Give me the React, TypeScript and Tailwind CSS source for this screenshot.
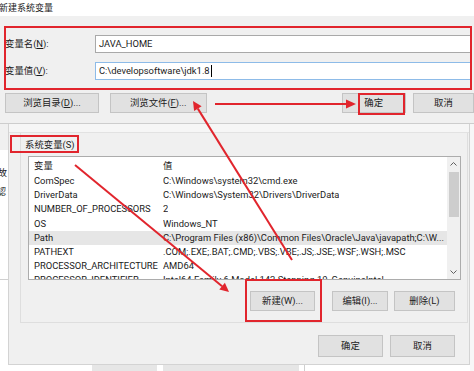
import React from "react";

const rows: [string, string][] = [
  ["ComSpec", "C:\\Windows\\system32\\cmd.exe"],
  ["DriverData", "C:\\Windows\\System32\\Drivers\\DriverData"],
  ["NUMBER_OF_PROCESSORS", "2"],
  ["OS", "Windows_NT"],
  ["Path", "C:\\Program Files (x86)\\Common Files\\Oracle\\Java\\javapath;C:\\W..."],
  ["PATHEXT", ".COM;.EXE;.BAT;.CMD;.VBS;.VBE;.JS;.JSE;.WSF;.WSH;.MSC"],
  ["PROCESSOR_ARCHITECTURE", "AMD64"],
  ["PROCESSOR_IDENTIFIER", "Intel64 Family 6 Model 142 Stepping 10, GenuineIntel"],
];

function Btn({ children, className }: { children: React.ReactNode; className: string }) {
  return (
    <div
      className={
        "flex items-center justify-center border border-[#c4c4c4] bg-[#e1e1e1] text-[#222] " + className
      }
    >
      {children}
    </div>
  );
}

export default function App() {
  const red = "#e1252d";
  return (
    <div className="relative w-[474px] h-[371px] overflow-hidden bg-[#f0f0f0] text-[9.4px] leading-[14px] text-[#1a1a1a] font-['Roboto','Noto_Sans_CJK_SC',sans-serif]">
      {/* Top dialog: 新建系统变量 */}
      <div className="h-[124px] border-b border-[#cdcdcd] flex flex-col">
        <div className="h-[16px] bg-white flex items-center -ml-[1px] text-[9px]">新建系统变量</div>
        <div className="flex items-center mt-[19px]">
          <div className="w-[95px] pl-[5px]">
            变量名(<u>N</u>):
          </div>
          <div className="w-[376px] h-[18px] bg-white border border-[#a9a9a9] flex items-center pl-[3px]">
            JAVA_HOME
          </div>
        </div>
        <div className="flex items-center mt-[9px]">
          <div className="w-[95px] pl-[5px]">
            变量值(<u>V</u>):
          </div>
          <div className="w-[376px] h-[18px] bg-white border border-[#8dbbe8] flex items-center pl-[3px]">
            <span>C:\developsoftware\jdk1.8</span>
            <span className="w-px h-[12px] bg-black ml-px" />
          </div>
        </div>
        <div className="flex mt-[13px]">
          <Btn className="ml-[5px] w-[95px] h-[20px]">
            浏览目录(<u>D</u>)...
          </Btn>
          <Btn className="ml-[11px] w-[98px] h-[20px]">
            浏览文件(<u>F</u>)...
          </Btn>
          <Btn className="ml-[135px] w-[65px] h-[20px]">确定</Btn>
          <Btn className="ml-[7px] w-[62px] h-[20px]">取消</Btn>
        </div>
      </div>

      {/* Background dialog: 环境变量 */}
      <div className="flex h-[247px]">
        <div className="w-[8px] flex flex-col">
          <div className="h-[26px]" />
          <div className="flex-1 bg-white relative overflow-hidden text-[9px]">
            <div className="absolute left-[-2px] top-[16px]">故</div>
            <div className="absolute left-[-3px] top-[35px]">認</div>
            <div className="absolute left-0 top-[129px] w-[8px] h-px bg-[#d0d0d0]" />
          </div>
          <div className="h-[6px] bg-white" />
        </div>
        <div className="flex flex-col w-[462px]">
          <div className="h-[241px] border-l border-r border-b border-[#d3d3d3] bg-[#f0f0f0] flex flex-col">
            <div className="h-[9px] bg-[#f6f6f6] border-b border-[#e2e2e2]" />
            <div className="ml-[11px] w-[448px] h-[190px] border-l border-r border-b border-[#dedede] flex flex-col">
              <div className="ml-[4px] mt-[5px] h-[14px] flex items-center">系统变量(S)</div>
              <div className="ml-[7px] mt-[4px] w-[433px] h-[124px] border border-[#acacac] bg-white flex overflow-hidden">
                <div className="flex-1 flex flex-col overflow-hidden">
                  <div className="h-[17px] flex items-center shrink-0">
                    <div className="w-[134px] pl-[5px]">变量</div>
                    <div>值</div>
                  </div>
                  {rows.map(([k, v]) => (
                    <div
                      key={k}
                      className={
                        "h-[14.2px] shrink-0 flex items-center whitespace-nowrap " +
                        (k === "Path" ? "bg-[#e6e6e6]" : "")
                      }
                    >
                      <div className="w-[134px] pl-[5px] shrink-0">{k}</div>
                      <div className="overflow-hidden">{v}</div>
                    </div>
                  ))}
                </div>
                <div className="w-[13px] bg-[#f0f0f0] flex flex-col items-center shrink-0">
                  <svg width="13" height="12" viewBox="0 0 13 12" className="mt-[1px]">
                    <path d="M3.5 7.5 L6.5 4.5 L9.5 7.5" fill="none" stroke="#606060" strokeWidth="1" />
                  </svg>
                  <div className="w-[10px] h-[45px] bg-[#cdcdcd] mt-[2px]" />
                  <div className="flex-1" />
                  <svg width="13" height="12" viewBox="0 0 13 12" className="mb-[1px]">
                    <path d="M3.5 4.5 L6.5 7.5 L9.5 4.5" fill="none" stroke="#606060" strokeWidth="1" />
                  </svg>
                </div>
              </div>
              <div className="flex mt-[11px]">
                <Btn className="ml-[229px] w-[65px] h-[20px]">新建(W)...</Btn>
                <Btn className="ml-[17px] w-[56px] h-[20px]">编辑(I)...</Btn>
                <Btn className="ml-[6px] w-[61px] h-[20px]">删除(L)</Btn>
              </div>
            </div>
            <div className="flex mt-[12px]">
              <Btn className="ml-[309px] w-[65px] h-[22px]">确定</Btn>
              <Btn className="ml-[7px] w-[65px] h-[22px]">取消</Btn>
            </div>
          </div>
          <div className="flex-1 bg-white flex">
            <div className="ml-[84px] w-[65px] bg-[#e6e6e6]" />
            <div className="ml-[6px] w-[136px] bg-[#e6e6e6]" />
            <div className="ml-[5px] w-px bg-[#cfcfcf]" />
          </div>
        </div>
        <div className="flex-1 bg-[#f7f7f7]" />
      </div>

      {/* Annotations */}
      <svg className="absolute inset-0 pointer-events-none" width="474" height="371" viewBox="0 0 474 371">
        <g fill="none" stroke={red} strokeWidth="2">
          <rect x="5" y="27" width="466" height="62" />
          <rect x="359" y="94" width="45" height="20" />
          <rect x="11" y="136" width="67" height="16" />
          <rect x="246" y="280" width="75" height="41" />
          <line x1="215" y1="104" x2="348" y2="104" />
          <line x1="292" y1="260" x2="197.8" y2="108.6" />
          <line x1="75" y1="165" x2="222.1" y2="286.3" />
        </g>
        <g fill={red}>
          <polygon points="356,104 346,99.5 346,108.5" />
          <polygon points="193,101 201.6,106.3 194.1,111" />
          <polygon points="229,292 219.3,289.6 224.9,282.8" />
        </g>
      </svg>
    </div>
  );
}
